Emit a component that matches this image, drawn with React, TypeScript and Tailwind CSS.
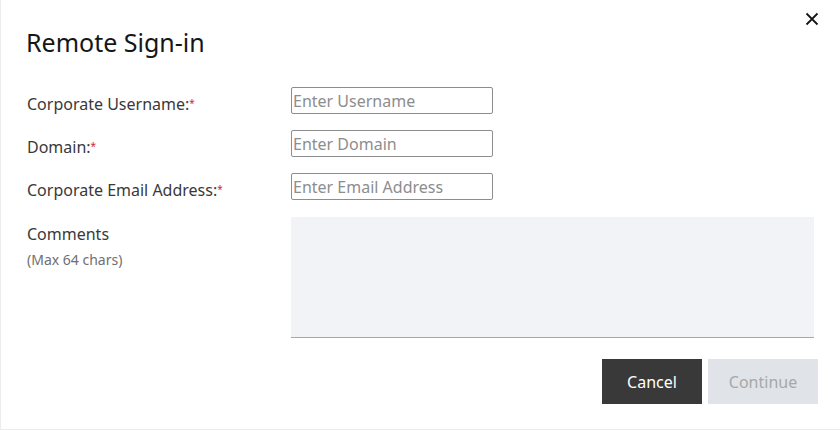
import React from 'react';

const fields = [
  { label: 'Corporate Username:', placeholder: 'Enter Username' },
  { label: 'Domain:', placeholder: 'Enter Domain' },
  { label: 'Corporate Email Address:', placeholder: 'Enter Email Address' },
];

export default function App() {
  return (
    <div className="relative w-[840px] h-[430px] bg-white border-l border-b border-[#ececec] font-['Noto_Sans',sans-serif] text-[#393939]">
      {/* Close */}
      <button className="absolute right-[20px] top-[11px] w-[16px] h-[16px] flex items-center justify-center">
        <svg width="14" height="14" viewBox="0 0 14 14" fill="none">
          <path d="M1.5 1.5 L12.5 12.5 M12.5 1.5 L1.5 12.5" stroke="#161616" strokeWidth="1.8" />
        </svg>
      </button>

      <h2 className="pt-[27px] pl-[25px] text-[25px] leading-[31px] text-[#161616]">Remote Sign-in</h2>

      <div className="mt-[29px] pl-[26px] flex flex-col gap-[16px]">
        {fields.map((f) => (
          <div key={f.label} className="flex items-center h-[27px]">
            <label className="w-[264px] text-[16px] leading-[24px] pt-[5px]">
              {f.label}
              <span className="text-[#da1e28] text-[10px] align-[3px]">*</span>
            </label>
            <input
              placeholder={f.placeholder}
              className="w-[202px] h-[27px] border border-[#8d8d8d] rounded-[2px] px-[1px] text-[16px] text-[#161616] placeholder:text-[#8d8d8d] outline-none"
            />
          </div>
        ))}

        <div className="flex items-start mt-[1px]">
          <div className="w-[264px] pt-[5px]">
            <div className="text-[16px] leading-[24px]">Comments</div>
            <div className="text-[14px] leading-[18px] text-[#6f6f6f] mt-[5px]">(Max 64 chars)</div>
          </div>
          <textarea className="w-[523px] h-[121px] bg-[#f2f3f6] border-b border-[#a8a8a8] resize-none outline-none" />
        </div>
      </div>

      <div className="mt-[21px] pr-[22px] flex justify-end gap-[6px]">
        <button className="w-[100px] h-[45px] bg-[#393939] text-white text-[16px]">Cancel</button>
        <button className="w-[110px] h-[45px] bg-[#e0e3e8] text-[#a8a8a8] text-[16px]">Continue</button>
      </div>
    </div>
  );
}
